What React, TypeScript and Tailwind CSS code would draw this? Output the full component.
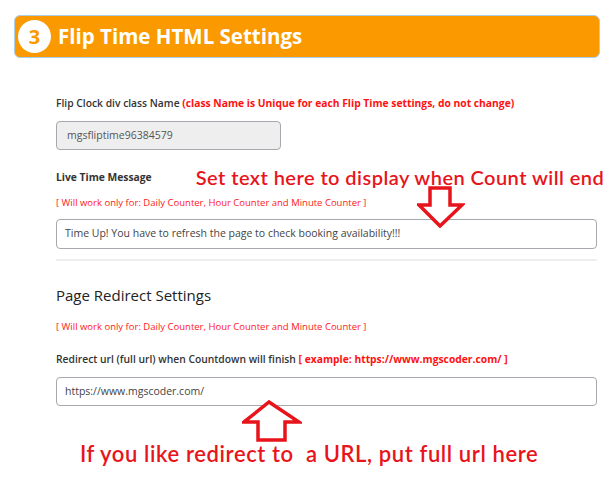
function DownArrow() {
  return (
    <svg width="48" height="42" viewBox="0 0 48 42" className="absolute left-[361px] top-[-33px]">
      <path d="M13 2 H33 V19 H45 L23 40 L2 19 H13 Z" fill="white" stroke="#e8141b" strokeWidth="3.5" strokeLinejoin="miter" />
    </svg>
  );
}

function UpArrow() {
  return (
    <svg width="60" height="42" viewBox="0 0 60 42" className="ml-[186px] -mt-[6px] block">
      <path d="M27 2 L57 22 H43 V40 H16 V22 H2 Z" fill="white" stroke="#e8141b" strokeWidth="3.5" strokeLinejoin="miter" />
    </svg>
  );
}

export default function App() {
  return (
    <div className="w-[614px] h-[480px] overflow-hidden bg-white pt-[15px] font-['Open_Sans',sans-serif] text-[#333]">
      <div className="ml-[14px] w-[586px] h-[43px] bg-[#fa9a00] border border-[#a9cfe9] rounded-[6px] flex items-center pl-[3px] gap-[7px]">
        <div className="w-[33px] h-[33px] rounded-full bg-white flex items-center justify-center text-[#fa9a00] font-bold text-[20px]">3</div>
        <h1 className="text-white font-bold text-[20.5px] leading-none">Flip Time HTML Settings</h1>
      </div>

      <div className="pl-[56px] pr-[17px]">
        <p className="mt-[37px] text-[10.3px] leading-4 font-semibold">
          Flip Clock div class Name{' '}
          <span className="text-[#ff1111] font-bold">(class Name is Unique for each Flip Time settings, do not change)</span>
        </p>
        <div className="mt-[10px] w-[225px] h-[29px] bg-[#eeeeee] border border-[#a5a9ad] rounded-[4px] flex items-center px-[10px] text-[10.5px] text-[#555]">
          mgsfliptime96384579
        </div>

        <div className="mt-[16px] flex items-end h-[22px]">
          <p className="shrink-0 whitespace-nowrap text-[10.3px] font-bold leading-4 mb-[3px]">Live Time Message</p>
          <p className="ml-[44px] text-[#e8141b] text-[20px] font-['Lato',sans-serif] font-semibold leading-[22px] tracking-[0.45px] whitespace-nowrap">
            Set text here to display when Count will end
          </p>
        </div>
        <p className="mt-[7px] text-[9.5px] leading-4 text-[#ff2020]">[ Will work only for: Daily Counter, Hour Counter and Minute Counter ]</p>
        <div className="relative mt-[8px]">
          <div className="h-[30px] border border-[#a5a9ad] rounded-[4px] flex items-center px-[8px] text-[10.5px] text-[#444] bg-white">
            Time Up! You have to refresh the page to check booking availability!!!
          </div>
          <DownArrow />
        </div>
        <div className="mt-[10px] h-[2px] bg-[#eeeeee]" />

        <h2 className="mt-[24px] text-[15px] leading-5 text-[#222] font-medium">Page Redirect Settings</h2>
        <p className="mt-[14px] text-[9.5px] leading-4 text-[#ff2020]">[ Will work only for: Daily Counter, Hour Counter and Minute Counter ]</p>
        <p className="mt-[16px] text-[10.3px] leading-4 font-semibold">
          Redirect url (full url) when Countdown will finish{' '}
          <span className="text-[#ff1111] font-bold">[ example: https://www.mgscoder.com/ ]</span>
        </p>
        <div className="mt-[10px] h-[29px] border border-[#a5a9ad] rounded-[4px] flex items-center px-[8px] text-[10.5px] text-[#444] bg-white">
          https://www.mgscoder.com/
        </div>
      </div>
      <div className="pl-[56px]">
        <UpArrow />
        <p className="ml-[24px] mt-[0px] text-[#e8141b] text-[22px] font-['Lato',sans-serif] font-semibold leading-6 tracking-[0.6px] whitespace-nowrap">
          If you like redirect to&nbsp; a URL, put full url here
        </p>
      </div>
    </div>
  );
}
